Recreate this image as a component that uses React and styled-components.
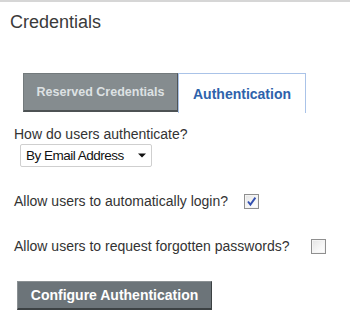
import React, { useState } from 'react';
import styled, { createGlobalStyle } from 'styled-components';

const GlobalStyle = createGlobalStyle`
    html, body {
        margin: 0;
        padding: 0;
        background: #ffffff;
    }
    body {
        font-family: "Liberation Sans", Arial, sans-serif;
        color: #333333;
    }
`;

const Page = styled.div`
    width: 350px;
    height: 328px;
    box-sizing: border-box;
    border-top: 2px solid #d6d6d6;
    padding: 10px 0 0 10px;
    overflow: hidden;
`;

const Title = styled.h2`
    margin: 0;
    font-size: 18px;
    font-weight: normal;
    line-height: 21px;
    color: #3a3a3a;
`;

const TabBar = styled.div`
    display: flex;
    align-items: flex-start;
    margin: 40px 0 0 13px;
`;

const Tab = styled.div`
    box-sizing: border-box;
    display: flex;
    align-items: center;
    justify-content: center;
    width: ${p => (p.$active ? '128px' : '155px')};
    height: ${p => (p.$active ? '40px' : '39px')};
    font-size: ${p => (p.$active ? '14px' : '12.5px')};
    font-weight: bold;
    color: ${p => (p.$active ? '#2e62ab' : '#dde1e3')};
    background: ${p => (p.$active ? '#ffffff' : '#858c8f')};
    border: 1px solid ${p => (p.$active ? '#aac3e8' : '#737a7c')};
    border-bottom: ${p => (p.$active ? 'none' : '2px solid #4d5254')};
    border-right-color: ${p => (p.$active ? '#aac3e8' : '#4f5456')};
    padding-top: ${p => (p.$active ? '1px' : '0')};
    cursor: pointer;
`;

const Body = styled.div`
    padding-left: 4px;
`;

const Label = styled.div`
    font-size: 14px;
    line-height: 16px;
    margin-top: ${p => p.$top || 0}px;
`;

const SelectBox = styled.div`
    box-sizing: border-box;
    display: flex;
    align-items: center;
    justify-content: space-between;
    width: 132px;
    height: 23px;
    margin: 2px 0 0 6px;
    padding: 0 5px 0 5px;
    border: 1px solid #cfcfcf;
    border-radius: 2px;
    font-size: 13.5px;
    letter-spacing: -0.5px;
    color: #111;
    background: #fff;
`;

const Row = styled.div`
    display: flex;
    align-items: center;
    margin-top: ${p => p.$top}px;
    font-size: 14px;
    line-height: 16px;
`;

const Box = styled.span`
    box-sizing: border-box;
    display: inline-flex;
    align-items: center;
    justify-content: center;
    width: 15px;
    height: 15px;
    margin-left: ${p => p.$gap}px;
    border: 1px solid #8f8f8f;
    background: linear-gradient(135deg, #e4e4e4 0%, #f7f7f7 60%, #ffffff 100%);
    box-shadow: inset 0 0 0 1px #f4f4f4;
`;

const Button = styled.button`
    box-sizing: border-box;
    display: block;
    width: 195px;
    height: 29px;
    margin: 27px 0 0 3px;
    padding: 0;
    border: 1px solid #8a9093;
    border-right-color: #3c4143;
    border-bottom: 2px solid #3c4143;
    background: #6c7479;
    color: #ffffff;
    font-family: "Liberation Sans", Arial, sans-serif;
    font-size: 14px;
    font-weight: bold;
    cursor: pointer;
`;

function Caret() {
    return (
        <svg width="8" height="5" viewBox="0 0 8 5">
            <path d="M0 0.5 H8 L4 4.5 Z" fill="#111" />
        </svg>
    );
}

function Checkbox({ checked, onToggle, gap }) {
    return (
        <Box $gap={gap} onClick={onToggle} role="checkbox" aria-checked={checked}>
            {checked && (
                <svg width="11" height="11" viewBox="0 0 11 11">
                    <path d="M2 5.5 L4.4 8.6 L9.4 1.6" fill="none" stroke="#3450b0" strokeWidth="1.9" />
                </svg>
            )}
        </Box>
    );
}

export default function App() {
    const [autoLogin, setAutoLogin] = useState(true);
    const [forgotten, setForgotten] = useState(false);

    return (
        <>
            <GlobalStyle />
            <Page>
                <Title>Credentials</Title>

                <TabBar>
                    <Tab>Reserved Credentials</Tab>
                    <Tab $active>Authentication</Tab>
                </TabBar>

                <Body>
                    <Label $top={13}>How do users authenticate?</Label>
                    <SelectBox>
                        <span>By Email Address</span>
                        <Caret />
                    </SelectBox>

                    <Row $top={26}>
                        Allow users to automatically login?
                        <Checkbox gap={16} checked={autoLogin} onToggle={() => setAutoLogin(!autoLogin)} />
                    </Row>
                    <Row $top={29}>
                        Allow users to request forgotten passwords?
                        <Checkbox gap={22} checked={forgotten} onToggle={() => setForgotten(!forgotten)} />
                    </Row>

                    <Button>Configure Authentication</Button>
                </Body>
            </Page>
        </>
    );
}
